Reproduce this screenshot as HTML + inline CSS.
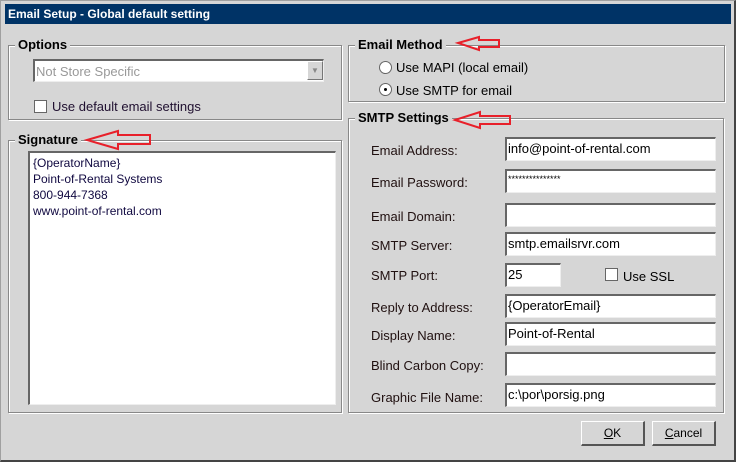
<!DOCTYPE html>
<html><head><style>
*{margin:0;padding:0;box-sizing:border-box}
body{width:736px;height:464px;background:#fff;position:relative;overflow:hidden;font-family:"Liberation Sans",sans-serif;font-size:12px;color:#000}
.win{position:absolute;left:0;top:0;width:736px;height:462px;background:#d6d6d6;border:1px solid #a0a0a0;border-right:2px solid #444;border-bottom:2px solid #444}
.title{position:absolute;left:5px;top:4px;width:726px;height:20px;background:#003366;color:#fff;font-weight:bold;font-size:12px;line-height:20px;padding-left:3px}
.grp{position:absolute;border:1px solid #888;box-shadow:inset 1px 1px 0 #fff,1px 1px 0 #fff}
.lg{position:absolute;background:#d6d6d6;font-weight:bold;font-size:13px;padding:0 3px;top:-9px;left:6px;line-height:16px}
.abs{position:absolute;white-space:nowrap}
.inp{position:absolute;background:#fff;border-top:2px solid #666;border-left:2px solid #666;border-right:1px solid #eee;border-bottom:1px solid #eee;font-size:13px;line-height:19px;padding-left:1px}
.lbl{position:absolute;font-size:13px;color:#201010}
.btn{position:absolute;width:64px;height:25px;background:#d6d6d6;border:1px solid #fff;border-right:2px solid #555;border-bottom:2px solid #555;text-align:center;line-height:22px;font-size:12px}
.cb{position:absolute;width:13px;height:13px;background:#fff;border:1px solid #666}
.rb{position:absolute;width:13px;height:13px;border-radius:50%;background:#fff;border:1px solid #666}
</style></head><body>
<div class="win"></div>
<div class="title">Email Setup - Global default setting</div>

<div class="grp" style="left:8px;top:45px;width:334px;height:75px"><div class="lg">Options</div></div>
<div class="inp" style="left:33px;top:59px;width:291px;height:23px;color:#999;border-color:#666 #eee #eee #666;line-height:21px">Not Store Specific</div>
<div class="abs" style="left:307px;top:61px;width:16px;height:19px;background:#d6d6d6;border:1px solid #fff;border-right-color:#777;border-bottom-color:#777;color:#888;font-size:8px;text-align:center;line-height:18px">▼</div>
<div class="cb" style="left:34px;top:100px"></div>
<div class="abs" style="left:52px;top:99px;font-size:13px;color:#201030">Use default email settings</div>

<div class="grp" style="left:8px;top:140px;width:334px;height:273px"><div class="lg">Signature</div></div>
<div class="inp" style="left:28px;top:151px;width:308px;height:254px;line-height:16px;padding:2px 3px;font-size:12px;color:#100840">{OperatorName}<br>Point-of-Rental Systems<br>800-944-7368<br>www.point-of-rental.com</div>

<div class="grp" style="left:348px;top:45px;width:377px;height:57px"><div class="lg">Email Method</div></div>
<div class="rb" style="left:379px;top:61px"></div>
<div class="abs" style="left:396px;top:60px;font-size:13px">Use MAPI (local email)</div>
<div class="rb" style="left:379px;top:83px"><div style="position:absolute;left:4px;top:4px;width:3px;height:3px;background:#000;border-radius:50%"></div></div>
<div class="abs" style="left:396px;top:83px;font-size:13px">Use SMTP for email</div>

<div class="grp" style="left:348px;top:118px;width:376px;height:295px"><div class="lg">SMTP Settings</div></div>
<div class="lbl" style="left:371px;top:143px">Email Address:</div>
<div class="inp" style="left:505px;top:137px;width:211px;height:24px">info@point-of-rental.com</div>
<div class="lbl" style="left:371px;top:175px">Email Password:</div>
<div class="inp" style="left:505px;top:169px;width:211px;height:24px;font-size:9px;line-height:17px">***************</div>
<div class="lbl" style="left:371px;top:209px">Email Domain:</div>
<div class="inp" style="left:505px;top:203px;width:211px;height:24px"></div>
<div class="lbl" style="left:371px;top:238px">SMTP Server:</div>
<div class="inp" style="left:505px;top:232px;width:211px;height:24px">smtp.emailsrvr.com</div>
<div class="lbl" style="left:371px;top:268px">SMTP Port:</div>
<div class="inp" style="left:505px;top:263px;width:56px;height:24px">25</div>
<div class="cb" style="left:605px;top:268px"></div>
<div class="abs" style="left:623px;top:269px;font-size:13px">Use SSL</div>
<div class="lbl" style="left:371px;top:300px">Reply to Address:</div>
<div class="inp" style="left:505px;top:294px;width:211px;height:24px">{OperatorEmail}</div>
<div class="lbl" style="left:371px;top:328px">Display Name:</div>
<div class="inp" style="left:505px;top:322px;width:211px;height:24px">Point-of-Rental</div>
<div class="lbl" style="left:371px;top:358px">Blind Carbon Copy:</div>
<div class="inp" style="left:505px;top:352px;width:211px;height:24px"></div>
<div class="lbl" style="left:371px;top:390px">Graphic File Name:</div>
<div class="inp" style="left:505px;top:383px;width:211px;height:24px">c:\por\porsig.png</div>

<div class="btn" style="left:581px;top:421px"><u>O</u>K</div>
<div class="btn" style="left:652px;top:421px"><u>C</u>ancel</div>

<svg width="736" height="464" style="position:absolute;left:0;top:0" fill="none" stroke="#e8202a" stroke-width="2">
<path d="M87 140 L118 131 L118 135 L150 135 L150 144 L118 144 L118 149 Z"/>
<path d="M458 43 L479 37 L479 40 L499 40 L499 47 L479 47 L479 50 Z"/>
<path d="M455 120 L480 112 L480 116 L510 116 L510 124 L480 124 L480 128 Z"/>
</svg>
</body></html>
